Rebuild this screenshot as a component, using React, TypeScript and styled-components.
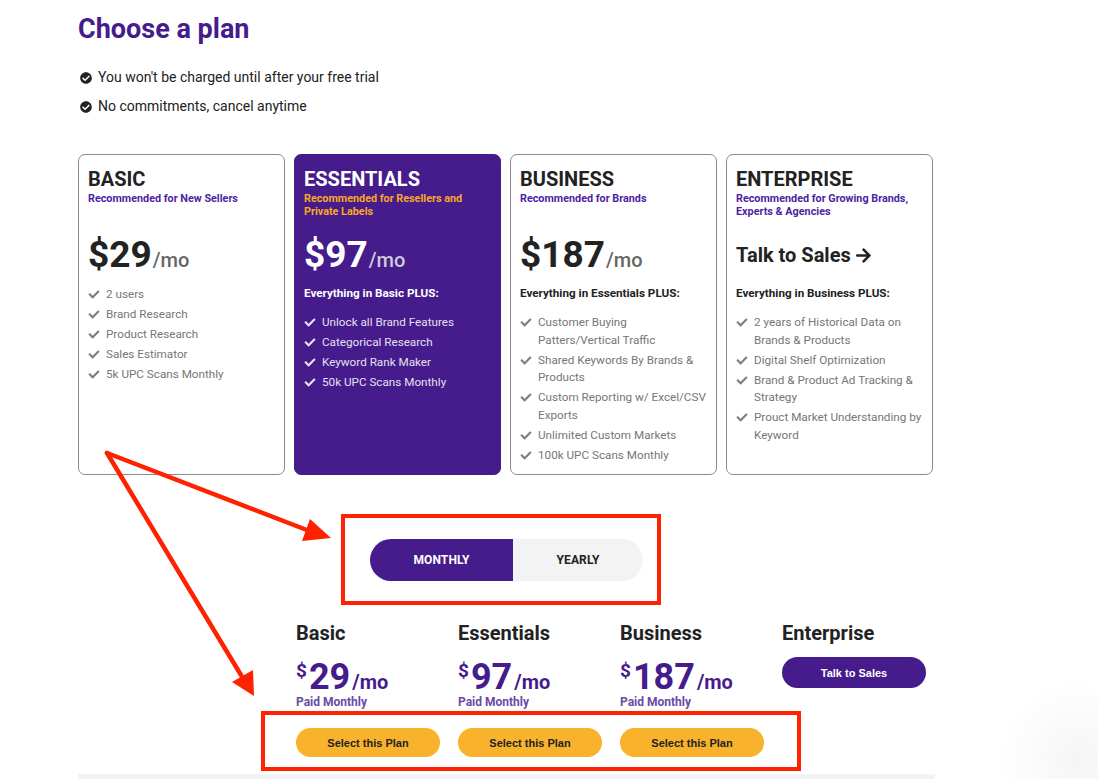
import React from "react";
import styled, { createGlobalStyle } from "styled-components";
import { FaCheckCircle, FaCheck, FaArrowRight } from "react-icons/fa";

const PURPLE = "#461b8c";

const Global = createGlobalStyle`
  html, body { margin: 0; padding: 0; background: #fff; }
  body { font-family: Roboto, "Liberation Sans", Arial, sans-serif; color: #222; }
  * { box-sizing: border-box; }
`;

const Page = styled.div`
  position: relative;
  width: 1098px;
  height: 779px;
  overflow: hidden;
  padding: 13px 0 0 78px;
`;

const Title = styled.h1`
  margin: 0;
  font-size: 27px;
  line-height: 32px;
  font-weight: 700;
  color: ${PURPLE};
`;

const Bullets = styled.ul`
  list-style: none;
  margin: 18px 0 0;
  padding: 0 0 0 2px;
`;

const Bullet = styled.li`
  display: flex;
  align-items: center;
  gap: 6px;
  font-size: 14px;
  line-height: 29px;
  color: #222;
  svg { width: 12px; height: 12px; color: #222; }
`;

const Cards = styled.div`
  margin-top: 33px;
  display: grid;
  grid-template-columns: repeat(4, 207px);
  gap: 9px;
  width: 855px;
`;

const Card = styled.div<{ $featured?: boolean }>`
  min-height: 321px;
  border-radius: 7px;
  border: 1px solid ${(p) => (p.$featured ? PURPLE : "#8a8a8a")};
  background: ${(p) => (p.$featured ? PURPLE : "#fff")};
  padding: 11px 9px 6px;
  display: flex;
  flex-direction: column;
`;

const CardTitle = styled.div<{ $featured?: boolean }>`
  font-size: 20px;
  line-height: 26px;
  font-weight: 700;
  color: ${(p) => (p.$featured ? "#fff" : "#222")};
`;

const CardSub = styled.div<{ $featured?: boolean }>`
  font-size: 10.8px;
  line-height: 13px;
  font-weight: 700;
  height: 26px;
  color: ${(p) => (p.$featured ? "#f8a927" : "#4d1fa3")};
`;

const PriceRow = styled.div<{ $featured?: boolean }>`
  margin-top: 15px;
  height: 44px;
  line-height: 44px;
  margin-bottom: 3px;
  white-space: nowrap;
  color: ${(p) => (p.$featured ? "#fff" : "#222")};
`;

const Amount = styled.span`
  font-size: 37px;
  font-weight: 700;
`;

const Per = styled.span<{ $featured?: boolean }>`
  font-size: 20px;
  font-weight: 500;
  margin-left: 1px;
  color: ${(p) => (p.$featured ? "#cfcbd8" : "#666")};
`;

const SalesLink = styled.div`
  display: flex;
  align-items: center;
  gap: 4px;
  font-size: 20px;
  font-weight: 700;
  color: #222;
  height: 44px;
  margin-top: 15px;
  margin-bottom: 3px;
  svg { width: 17px; height: 17px; }
`;

const PlusHead = styled.div<{ $featured?: boolean }>`
  margin-top: 5px;
  margin-bottom: 12px;
  font-size: 11.7px;
  line-height: 17px;
  font-weight: 700;
  color: ${(p) => (p.$featured ? "#fff" : "#222")};
`;

const Features = styled.ul<{ $plain?: boolean }>`
  list-style: none;
  margin: ${(p) => (p.$plain ? "6px 0 0" : "0")};
  padding: 0;
`;

const Feature = styled.li<{ $featured?: boolean }>`
  display: flex;
  align-items: flex-start;
  gap: 6px;
  font-size: 11.7px;
  line-height: 17.5px;
  margin-bottom: 2.5px;
  color: ${(p) => (p.$featured ? "#e4e0ee" : "#767676")};
  svg {
    flex: none;
    width: 12px;
    height: 11px;
    margin-top: 3px;
    color: ${(p) => (p.$featured ? "#e4e0ee" : "#808080")};
  }
`;

const ToggleRow = styled.div`
  width: 855px;
  display: flex;
  justify-content: center;
  margin-top: 64px;
  padding-left: 2px;
`;

const Toggle = styled.div`
  display: flex;
  height: 42px;
  border-radius: 21px;
  overflow: hidden;
`;

const ToggleBtn = styled.button<{ $active?: boolean; $w: number }>`
  width: ${(p) => p.$w}px;
  border: 0;
  font-family: inherit;
  font-size: 12px;
  font-weight: 700;
  letter-spacing: 0.1px;
  background: ${(p) => (p.$active ? PURPLE : "#f3f3f3")};
  color: ${(p) => (p.$active ? "#fff" : "#222")};
`;

const Summary = styled.div`
  margin-top: 40px;
  padding-left: 218px;
  display: grid;
  grid-template-columns: repeat(4, 162px);
`;

const Col = styled.div`
  display: flex;
  flex-direction: column;
  align-items: flex-start;
`;

const ColTitle = styled.div`
  font-size: 20px;
  line-height: 24px;
  font-weight: 700;
  color: #222;
`;

const BigPrice = styled.div`
  margin-top: 14px;
  height: 36px;
  display: flex;
  align-items: baseline;
  color: ${PURPLE};
  font-weight: 700;
  white-space: nowrap;
`;

const Dollar = styled.span`
  align-self: flex-start;
  font-size: 19px;
  line-height: 19px;
  margin-top: 2px;
  margin-right: 2px;
`;

const BigAmount = styled.span`
  font-size: 36px;
  line-height: 36px;
`;

const BigPer = styled.span`
  font-size: 20px;
  line-height: 20px;
  margin-left: 2px;
`;

const Paid = styled.div`
  margin-top: 1px;
  font-size: 12px;
  line-height: 12px;
  font-weight: 700;
  color: #6a4aa6;
`;

const PillBtn = styled.button<{ $variant: "yellow" | "purple" }>`
  width: 144px;
  height: ${(p) => (p.$variant === "yellow" ? 29 : 31)}px;
  margin-top: ${(p) => (p.$variant === "yellow" ? 20 : 12)}px;
  border: 0;
  border-radius: 16px;
  font-family: "Liberation Sans", Arial, sans-serif;
  font-size: 11px;
  font-weight: 700;
  background: ${(p) => (p.$variant === "yellow" ? "#f8b22c" : PURPLE)};
  color: ${(p) => (p.$variant === "yellow" ? "#222" : "#fff")};
`;

const Strip = styled.div`
  margin-top: 17px;
  width: 857px;
  height: 10px;
  background: #f3f3f3;
`;

const Annot = styled.div<{ $x: number; $y: number; $w: number; $h: number }>`
  position: absolute;
  left: ${(p) => p.$x}px;
  top: ${(p) => p.$y}px;
  width: ${(p) => p.$w}px;
  height: ${(p) => p.$h}px;
  border: 4px solid #ff2200;
  pointer-events: none;
`;

const Overlay = styled.svg`
  position: absolute;
  left: 0;
  top: 0;
  pointer-events: none;
`;

const Glow = styled.div`
  position: absolute;
  right: -60px;
  bottom: -60px;
  width: 160px;
  height: 160px;
  border-radius: 50%;
  background: radial-gradient(circle, rgba(0,0,0,0.04), rgba(0,0,0,0) 70%);
  pointer-events: none;
`;

type Plan = {
  name: string;
  sub: string;
  price?: string;
  plus?: string;
  featured?: boolean;
  features: string[];
};

const plans: Plan[] = [
  {
    name: "BASIC",
    sub: "Recommended for New Sellers",
    price: "$29",
    features: ["2 users", "Brand Research", "Product Research", "Sales Estimator", "5k UPC Scans Monthly"],
  },
  {
    name: "ESSENTIALS",
    sub: "Recommended for Resellers and Private Labels",
    price: "$97",
    plus: "Everything in Basic PLUS:",
    featured: true,
    features: ["Unlock all Brand Features", "Categorical Research", "Keyword Rank Maker", "50k UPC Scans Monthly"],
  },
  {
    name: "BUSINESS",
    sub: "Recommended for Brands",
    price: "$187",
    plus: "Everything in Essentials PLUS:",
    features: [
      "Customer Buying Patters/Vertical Traffic",
      "Shared Keywords By Brands & Products",
      "Custom Reporting w/ Excel/CSV Exports",
      "Unlimited Custom Markets",
      "100k UPC Scans Monthly",
    ],
  },
  {
    name: "ENTERPRISE",
    sub: "Recommended for Growing Brands, Experts & Agencies",
    plus: "Everything in Business PLUS:",
    features: [
      "2 years of Historical Data on Brands & Products",
      "Digital Shelf Optimization",
      "Brand & Product Ad Tracking & Strategy",
      "Prouct Market Understanding by Keyword",
    ],
  },
];

const summary = [
  { name: "Basic", price: "29" },
  { name: "Essentials", price: "97" },
  { name: "Business", price: "187" },
  { name: "Enterprise" },
];

export default function App() {
  return (
    <>
      <Global />
      <Page>
        <Title>Choose a plan</Title>
        <Bullets>
          <Bullet>
            <FaCheckCircle />
            You won't be charged until after your free trial
          </Bullet>
          <Bullet>
            <FaCheckCircle />
            No commitments, cancel anytime
          </Bullet>
        </Bullets>

        <Cards>
          {plans.map((p) => (
            <Card key={p.name} $featured={p.featured}>
              <CardTitle $featured={p.featured}>{p.name}</CardTitle>
              <CardSub $featured={p.featured}>{p.sub}</CardSub>
              {p.price ? (
                <PriceRow $featured={p.featured}>
                  <Amount>{p.price}</Amount>
                  <Per $featured={p.featured}>/mo</Per>
                </PriceRow>
              ) : (
                <SalesLink>
                  Talk to Sales <FaArrowRight />
                </SalesLink>
              )}
              {p.plus && <PlusHead $featured={p.featured}>{p.plus}</PlusHead>}
              <Features $plain={!p.plus}>
                {p.features.map((f) => (
                  <Feature key={f} $featured={p.featured}>
                    <FaCheck />
                    <span>{f}</span>
                  </Feature>
                ))}
              </Features>
            </Card>
          ))}
        </Cards>

        <ToggleRow>
          <Toggle>
            <ToggleBtn $active $w={143}>MONTHLY</ToggleBtn>
            <ToggleBtn $w={130}>YEARLY</ToggleBtn>
          </Toggle>
        </ToggleRow>

        <Summary>
          {summary.map((s) => (
            <Col key={s.name}>
              <ColTitle>{s.name}</ColTitle>
              {s.price ? (
                <>
                  <BigPrice>
                    <Dollar>$</Dollar>
                    <BigAmount>{s.price}</BigAmount>
                    <BigPer>/mo</BigPer>
                  </BigPrice>
                  <Paid>Paid Monthly</Paid>
                  <PillBtn $variant="yellow">Select this Plan</PillBtn>
                </>
              ) : (
                <PillBtn $variant="purple">Talk to Sales</PillBtn>
              )}
            </Col>
          ))}
        </Summary>
        <Strip />

        <Annot $x={341} $y={514} $w={320} $h={91} />
        <Annot $x={261} $y={711} $w={540} $h={60} />
        <Overlay width={1098} height={779}>
          <g stroke="#ff2200" strokeWidth={4.5} strokeLinecap="round" fill="none">
            <line x1={107} y1={453} x2={312} y2={532} />
            <line x1={107} y1={453} x2={244} y2={680} />
          </g>
          <g fill="#ff2200">
            <polygon points="331,538 302,541 310,519" />
            <polygon points="254,696 232,682 253,670" />
          </g>
        </Overlay>
        <Glow />
      </Page>
    </>
  );
}
